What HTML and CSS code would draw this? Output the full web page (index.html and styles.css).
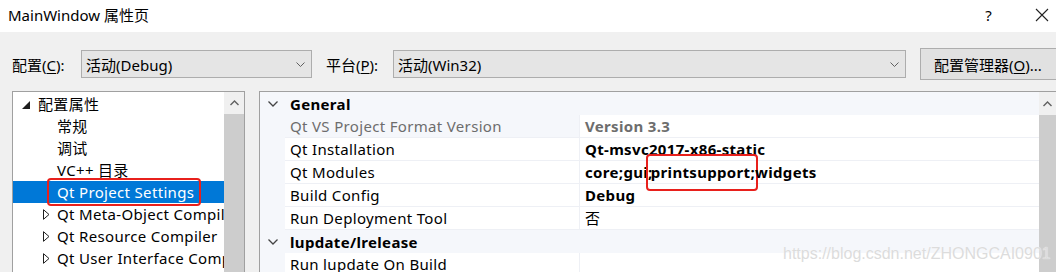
FILE: index.html
```html
<!DOCTYPE html>
<html lang="zh-CN">
<head>
  <meta charset="UTF-8">
  <title>MainWindow 属性页</title>
  <link rel="stylesheet" href="styles.css">
</head>
<body>
  <div class="titlebar">
    <span class="title">MainWindow 属性页</span>
    <div class="title-btns">
      <span class="help">?</span>
      <svg class="close" width="14" height="14" viewBox="0 0 14 14"><path d="M1 1 L13 13 M13 1 L1 13" stroke="#222" stroke-width="1.1" fill="none"/></svg>
    </div>
  </div>

  <div class="main">
    <div class="config-row">
      <span class="label">配置(<u>C</u>):</span>
      <div class="select sel-config">
        <span>活动(Debug)</span>
        <svg class="chev" width="9" height="5" viewBox="0 0 9 5"><path d="M0.5 0.5 L4.5 4.5 L8.5 0.5" stroke="#606060" fill="none"/></svg>
      </div>
      <span class="label label-platform">平台(<u>P</u>):</span>
      <div class="select sel-platform">
        <span>活动(Win32)</span>
        <svg class="chev" width="9" height="5" viewBox="0 0 9 5"><path d="M0.5 0.5 L4.5 4.5 L8.5 0.5" stroke="#606060" fill="none"/></svg>
      </div>
      <button class="btn-manager">配置管理器(<u>O</u>)...</button>
    </div>

    <div class="panes">
      <div class="tree">
        <div class="tree-list">
          <div class="node root"><span class="tri-open"></span>配置属性</div>
          <div class="node leaf">常规</div>
          <div class="node leaf">调试</div>
          <div class="node leaf">VC++ 目录</div>
          <div class="node leaf selected"><span class="mark">Qt Project Settings</span></div>
          <div class="node child"><svg class="tri-closed" width="7" height="11" viewBox="0 0 7 11"><path d="M0.5 0.7 L6 5.5 L0.5 10.3 Z" stroke="#1e1e1e" fill="none"/></svg>Qt Meta-Object Compiler</div>
          <div class="node child"><svg class="tri-closed" width="7" height="11" viewBox="0 0 7 11"><path d="M0.5 0.7 L6 5.5 L0.5 10.3 Z" stroke="#1e1e1e" fill="none"/></svg>Qt Resource Compiler</div>
          <div class="node child"><svg class="tri-closed" width="7" height="11" viewBox="0 0 7 11"><path d="M0.5 0.7 L6 5.5 L0.5 10.3 Z" stroke="#1e1e1e" fill="none"/></svg>Qt User Interface Compiler</div>
        </div>
        <div class="vscroll">
          <div class="arrow-up">
            <svg width="9" height="6" viewBox="0 0 9 6"><path d="M0.5 5 L4.5 1 L8.5 5" stroke="#606060" stroke-width="1.4" fill="none"/></svg>
          </div>
          <div class="thumb"></div>
        </div>
      </div>

      <div class="grid">
        <div class="grid-rows">
          <div class="group">
            <span class="gutter"><svg width="10" height="6" viewBox="0 0 10 6"><path d="M0.5 0.5 L5 5 L9.5 0.5" stroke="#444" stroke-width="1.3" fill="none"/></svg></span>
            <span class="group-name">General</span>
          </div>
          <div class="prop readonly">
            <span class="gutter"></span>
            <span class="name">Qt VS Project Format Version</span>
            <span class="value">Version 3.3</span>
          </div>
          <div class="prop">
            <span class="gutter"></span>
            <span class="name">Qt Installation</span>
            <span class="value">Qt-msvc2017-x86-static</span>
          </div>
          <div class="prop">
            <span class="gutter"></span>
            <span class="name">Qt Modules</span>
            <span class="value">core;gui;<span class="mark">printsupport;</span>widgets</span>
          </div>
          <div class="prop">
            <span class="gutter"></span>
            <span class="name">Build Config</span>
            <span class="value">Debug</span>
          </div>
          <div class="prop">
            <span class="gutter"></span>
            <span class="name">Run Deployment Tool</span>
            <span class="value plain">否</span>
          </div>
          <div class="group">
            <span class="gutter"><svg width="10" height="6" viewBox="0 0 10 6"><path d="M0.5 0.5 L5 5 L9.5 0.5" stroke="#444" stroke-width="1.3" fill="none"/></svg></span>
            <span class="group-name">lupdate/lrelease</span>
          </div>
          <div class="prop">
            <span class="gutter"></span>
            <span class="name">Run lupdate On Build</span>
            <span class="value"></span>
          </div>
        </div>
        <div class="vscroll vscroll-grid">
          <div class="arrow-up">
            <svg width="9" height="6" viewBox="0 0 9 6"><path d="M0.5 5 L4.5 1 L8.5 5" stroke="#606060" stroke-width="1.4" fill="none"/></svg>
          </div>
          <div class="thumb"></div>
        </div>
        <span class="watermark">https://blog.csdn.net/ZHONGCAI0901</span>
      </div>
    </div>
  </div>
</body>
</html>
```

FILE: styles.css
```css
html, body {
  margin: 0;
  height: 272px;
  overflow: hidden;
}
body {
  background-color: #fff;
  font-family: "Noto Sans", "Noto Sans CJK SC", sans-serif;
  font-size: 15px;
  letter-spacing: 0.33px;
  color: #000;
}
u {
  text-decoration-thickness: 1px;
  text-underline-offset: 2px;
}

.titlebar {
  height: 32px;
  display: flex;
  align-items: center;
  justify-content: space-between;
  padding-left: 8px;
  background-color: #fff;
}
.title {
  font-size: 15px;
  letter-spacing: 0;
  margin-top: -3px;
}
.title-btns {
  display: flex;
  align-items: center;
  gap: 43px;
  padding-right: 7px;
  margin-top: -3px;
}
.help {
  font-size: 15px;
}

.main {
  background-color: #f0f0f0;
  height: 240px;
  padding-top: 16px;
  box-sizing: border-box;
}
.config-row {
  display: flex;
  align-items: center;
  height: 32px;
  padding-left: 12px;
  letter-spacing: 0;
}
.config-row > * {
  flex: none;
}
.label {
  width: 69px;
}
.label-platform {
  margin-left: 14px;
  width: 67px;
}
.select {
  height: 28px;
  box-sizing: border-box;
  border: 1px solid #adadad;
  background-color: #e5e5e5;
  display: flex;
  align-items: center;
  justify-content: space-between;
  padding: 0 6px 0 4px;
}
.sel-config {
  width: 231px;
}
.sel-platform {
  width: 513px;
}
.btn-manager {
  margin-left: 14px;
  height: 32px;
  width: 150px;
  border: 1px solid #adadad;
  background-color: #e1e1e1;
  font: inherit;
  text-align: left;
  padding-left: 13px;
}

.panes {
  display: flex;
  margin-top: 11px;
  padding-left: 12px;
}

/* left tree */
.tree {
  width: 233px;
  flex: none;
  height: 200px;
  box-sizing: border-box;
  border: 1px solid #a0a0a0;
  background-color: #fff;
  display: flex;
}
.tree-list {
  flex: 1;
  padding-top: 1px;
  overflow: hidden;
  white-space: nowrap;
}
.node {
  height: 22px;
  line-height: 22px;
  position: relative;
}
.root {
  padding-left: 25px;
}
.leaf, .child {
  padding-left: 44px;
}
.selected {
  background-color: #0078d7;
  color: #fff;
}
.selected .mark {
  margin-left: -10px;
  padding: 2px 5px 2px 8px;
  border: 2px solid #e8201c;
  border-radius: 4px;
}
.tri-open {
  position: absolute;
  left: 9px;
  top: 8px;
  width: 0;
  height: 0;
  border-left: 8px solid transparent;
  border-bottom: 8px solid #1e1e1e;
}
.tri-closed {
  position: absolute;
  left: 30px;
  top: 6px;
}

.vscroll {
  width: 20px;
  background-color: #f0f0f0;
  display: flex;
  flex-direction: column;
}
.arrow-up {
  height: 22px;
  display: flex;
  align-items: center;
  justify-content: center;
}
.thumb {
  flex: 1;
  background-color: #cdcdcd;
}

/* property grid */
.grid {
  margin-left: 14px;
  flex: 1;
  height: 200px;
  border-top: 1px solid #a0a0a0;
  border-left: 1px solid #a0a0a0;
  display: flex;
  background-color: #fff;
  position: relative;
}
.grid-rows {
  flex: 1;
  overflow: hidden;
}
.group {
  display: flex;
  height: 23px;
  align-items: center;
  background-color: #f5f7fb;
}
.group-name {
  font-weight: bold;
  padding-left: 5px;
}
.gutter {
  width: 25px;
  flex: none;
  align-self: stretch;
  display: flex;
  align-items: center;
  justify-content: center;
  background-color: #f5f7fb;
}
.prop {
  display: flex;
  height: 23px;
  line-height: 22px;
}
.prop .name {
  width: 295px;
  box-sizing: border-box;
  padding-left: 5px;
  border-right: 1px solid #eef0f5;
  border-bottom: 1px solid #eef0f5;
  white-space: nowrap;
}
.prop .value {
  flex: 1;
  padding-left: 5px;
  font-weight: bold;
  border-bottom: 1px solid #eef0f5;
  white-space: nowrap;
}
.prop .value.plain {
  font-weight: normal;
}
.prop .value .mark {
  padding: 6px 1px 7px 3px;
  border: 2px solid #e8201c;
  border-radius: 4px;
  margin: 0 -3px 0 -7px;
}
.readonly .name {
  background-color: #f5f7fb;
  color: #6d6d6d;
}
.readonly .value {
  color: #6d6d6d;
}
.watermark {
  position: absolute;
  left: 523px;
  top: 153px;
  font-family: "Liberation Sans", sans-serif;
  font-size: 16px;
  letter-spacing: 0;
  color: #dcdcdc;
  text-shadow: 0 0 1px #fff;
}
.vscroll-grid {
  width: 17px;
  flex: none;
}
.vscroll-grid .arrow-up {
  height: 23px;
}
```
